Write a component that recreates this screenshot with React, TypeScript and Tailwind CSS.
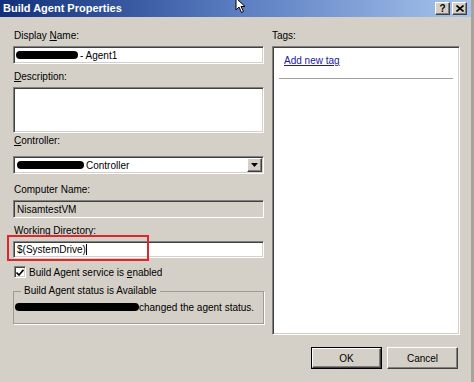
import React from 'react';

const sunken =
  'border border-t-[#808080] border-l-[#808080] border-b-white border-r-white shadow-[inset_1px_1px_0_#404040,inset_-1px_-1px_0_#d4d0c8]';

const raised =
  'border border-t-white border-l-white border-b-[#404040] border-r-[#404040] shadow-[inset_-1px_-1px_0_#808080]';

const Redacted = ({ w }: { w: number }) => (
  <span className="inline-block h-[8px] bg-black rounded-full align-middle" style={{ width: w }} />
);

const Label = ({ children, className = '' }: { children: React.ReactNode; className?: string }) => (
  <div className={`h-[12px] leading-[12px] text-[#000] ${className}`}>{children}</div>
);

const App = () => {
  return (
    <div
      className="relative w-[474px] h-[382px] bg-[#d4d0c8] overflow-hidden text-[10px] border-r-[3px] border-r-[#a8a49c]"
      style={{ fontFamily: '"Liberation Sans", Arial, sans-serif' }}
    >
      {/* title bar */}
      <div className="h-[17px] flex items-center justify-between bg-linear-to-r from-[#12307a] via-[#5a7cc0] to-[#a8c4ec] pl-[3px] pr-[4px]">
        <span className="text-white font-bold text-[11px] leading-[17px]">Build Agent Properties</span>
        <div className="flex gap-[2px]">
          <div className={`w-[15px] h-[13px] bg-[#d4d0c8] flex items-center justify-center font-bold text-[10px] leading-none ${raised}`}>?</div>
          <div className={`w-[15px] h-[13px] bg-[#d4d0c8] flex items-center justify-center ${raised}`}>
            <svg width="8" height="7" viewBox="0 0 8 7">
              <path d="M0.5 0.5 L7.5 6.5 M7.5 0.5 L0.5 6.5" stroke="#000" strokeWidth="1.6" />
            </svg>
          </div>
        </div>
      </div>

      {/* mouse cursor */}
      <svg className="absolute left-[235px] top-[-3px]" width="12" height="18" viewBox="0 0 12 18">
        <path d="M1 1 L1 13 L4 10 L6.5 15.5 L8.5 14.5 L6 9.5 L10 9.5 Z" fill="#fff" stroke="#000" strokeWidth="1" />
      </svg>

      <div className="flex pl-[13px] pt-[13px]">
        {/* left column */}
        <div className="w-[251px] flex flex-col">
          <Label className="pl-[1px]">
            Display <u>N</u>ame:
          </Label>
          <div className={`mt-[4px] h-[18px] bg-white flex items-center pl-[2px] ${sunken}`}>
            <Redacted w={62} />
            <span className="ml-[2px]">- Agent1</span>
          </div>

          <Label className="mt-[7px] pl-[1px]">
            <u>D</u>escription:
          </Label>
          <div className={`mt-[4px] h-[46px] bg-white ${sunken}`} />

          <Label className="mt-[2px] pl-[1px]">
            <u>C</u>ontroller:
          </Label>
          <div className={`mt-[9px] h-[18px] bg-white flex items-center ${sunken}`}>
            <div className="flex-1 flex items-center pl-[3px]">
              <Redacted w={67} />
              <span className="ml-[2px]">Controller</span>
            </div>
            <div className={`w-[15px] h-[14px] mr-[1px] bg-[#d4d0c8] flex items-center justify-center ${raised}`}>
              <svg width="7" height="4" viewBox="0 0 7 4">
                <path d="M0 0 L7 0 L3.5 4 Z" fill="#000" />
              </svg>
            </div>
          </div>

          <Label className="mt-[10px] pl-[1px]">Computer Name:</Label>
          <div className={`mt-[4px] h-[18px] bg-[#d4d0c8] flex items-center pl-[3px] ${sunken}`}>NisamtestVM</div>

          <Label className="mt-[7px] pl-[1px]">
            <u>W</u>orking Directory:
          </Label>
          <div className={`mt-[4px] h-[17px] bg-white flex items-center pl-[3px] ${sunken}`}>
            <span>$(SystemDrive)</span>
            <span className="inline-block w-[1px] h-[11px] bg-black" />
          </div>

          <div className="mt-[8px] h-[12px] flex items-center gap-[3px] pl-[1px]">
            <div className={`w-[12px] h-[12px] bg-white flex items-center justify-center ${sunken}`}>
              <svg width="8" height="7" viewBox="0 0 8 7">
                <path d="M0.5 3.5 L3 6 L7.5 0.8" stroke="#000" strokeWidth="1.6" fill="none" />
              </svg>
            </div>
            <span>
              Build Agent service is <u>e</u>nabled
            </span>
          </div>

          <fieldset className="mt-[7px] h-[39px] border border-[#a09c94] shadow-[1px_1px_0_#fff] px-[1px]">
            <legend className="ml-[6px] px-[3px] leading-[12px]">Build Agent status is Available</legend>
            <div className="mt-[4px] flex items-center h-[12px]">
              <Redacted w={124} />
              <span>changed the agent status.</span>
            </div>
          </fieldset>
        </div>

        {/* right column */}
        <div className="ml-[8px] w-[188px] flex flex-col">
          <Label>Tags:</Label>
          <div className={`mt-[4px] h-[289px] bg-white flex flex-col ${sunken}`}>
            <a className="mt-[8px] ml-[11px] text-[#1a1aa0] underline leading-[12px] w-fit">Add new tag</a>
            <div className="mt-[11px] mx-[6px] h-[1px] bg-[#a0a0a0]" />
          </div>
        </div>
      </div>

      {/* buttons */}
      <div className="absolute right-[13px] top-[347px] flex gap-[5px]">
        <div className="w-[71px] h-[22px] border border-black">
          <div className={`h-full bg-[#d4d0c8] flex items-center justify-center ${raised}`}>OK</div>
        </div>
        <div className={`w-[71px] h-[22px] bg-[#d4d0c8] flex items-center justify-center ${raised}`}>Cancel</div>
      </div>

      {/* annotation */}
      <div className="absolute left-[7px] top-[235px] w-[142px] h-[26px] border-[2px] border-[#e0262c]" />
    </div>
  );
};

export default App;
